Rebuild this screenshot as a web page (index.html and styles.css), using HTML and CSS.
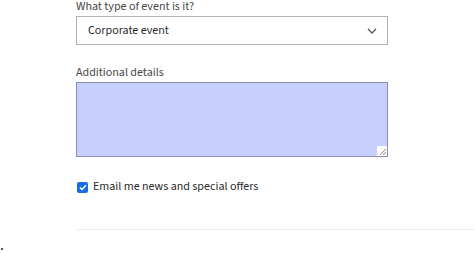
FILE: index.html
```html
<!DOCTYPE html>
<html>
<head>
<meta charset="utf-8">
<link rel="stylesheet" href="styles.css">
</head>
<body>
<div class="page">
  <form class="form">
    <div class="field">
      <label class="label">What type of event is it?</label>
      <div class="select">
        <span class="select-value">Corporate event</span>
        <svg class="chevron" width="10" height="6" viewBox="0 0 10 6"><path d="M1 1 L5 5 L9 1" fill="none" stroke="#555" stroke-width="1.3"/></svg>
      </div>
    </div>
    <div class="field field-details">
      <label class="label">Additional details</label>
      <div class="textarea">
        <svg class="grip" width="10" height="10" viewBox="0 0 10 10"><path d="M9 3 L3 9 M9 6 L6 9" stroke="#8a8a8a" stroke-width="1"/></svg>
      </div>
    </div>
    <label class="check">
      <span class="box"><svg width="8" height="7" viewBox="0 0 8 7"><path d="M1 3.6 L3 5.5 L7 1.2" fill="none" stroke="#fff" stroke-width="1.5"/></svg></span>
      <span class="check-text">Email me news and special offers</span>
    </label>
  </form>
  <div class="divider"></div>
</div>
<span class="dot"></span>
</body>
</html>
```
FILE: styles.css
```css
html, body {
  margin: 0;
  padding: 0;
  background: #fff;
}
body {
  font-family: "Source Sans 3", "Source Sans Pro", "Fira Sans", "Noto Sans", sans-serif;
  color: #2b2b2b;
  width: 474px;
  height: 253px;
  overflow: hidden;
  position: relative;
}
.page {
  padding-left: 76px;
  margin-top: -1px;
}
.form {
  width: 312px;
  display: flex;
  flex-direction: column;
}
.field {
  display: flex;
  flex-direction: column;
}
.label {
  font-size: 12px;
  line-height: 16px;
  color: #474747;
  margin-bottom: 1px;
}
.select {
  box-sizing: border-box;
  height: 29px;
  border: 1px solid #b3b3b3;
  display: flex;
  align-items: center;
  justify-content: space-between;
  padding: 0 10px 0 11px;
}
.select-value {
  font-size: 12px;
  color: #2b2b2b;
}
.field-details {
  margin-top: 20px;
}
.textarea {
  box-sizing: border-box;
  height: 75px;
  background: #c8d0ff;
  border: 1px solid #8c90a8;
  position: relative;
}
.grip {
  position: absolute;
  right: 0;
  bottom: 0;
  background: #fff;
}
.check {
  display: flex;
  align-items: center;
  margin-top: 22px;
  gap: 5px;
  line-height: 16px;
}
.box {
  width: 11px;
  height: 11px;
  margin-left: 1px;
  background: #1a6be6;
  border-radius: 2px;
  display: flex;
  align-items: center;
  justify-content: center;
}
.check-text {
  font-size: 12px;
  color: #2b2b2b;
}
.divider {
  margin-top: 34px;
  height: 1px;
  background: #ececec;
}
.dot {
  position: absolute;
  left: 1px;
  top: 248px;
  width: 2px;
  height: 2px;
  background: #555;
}
```
